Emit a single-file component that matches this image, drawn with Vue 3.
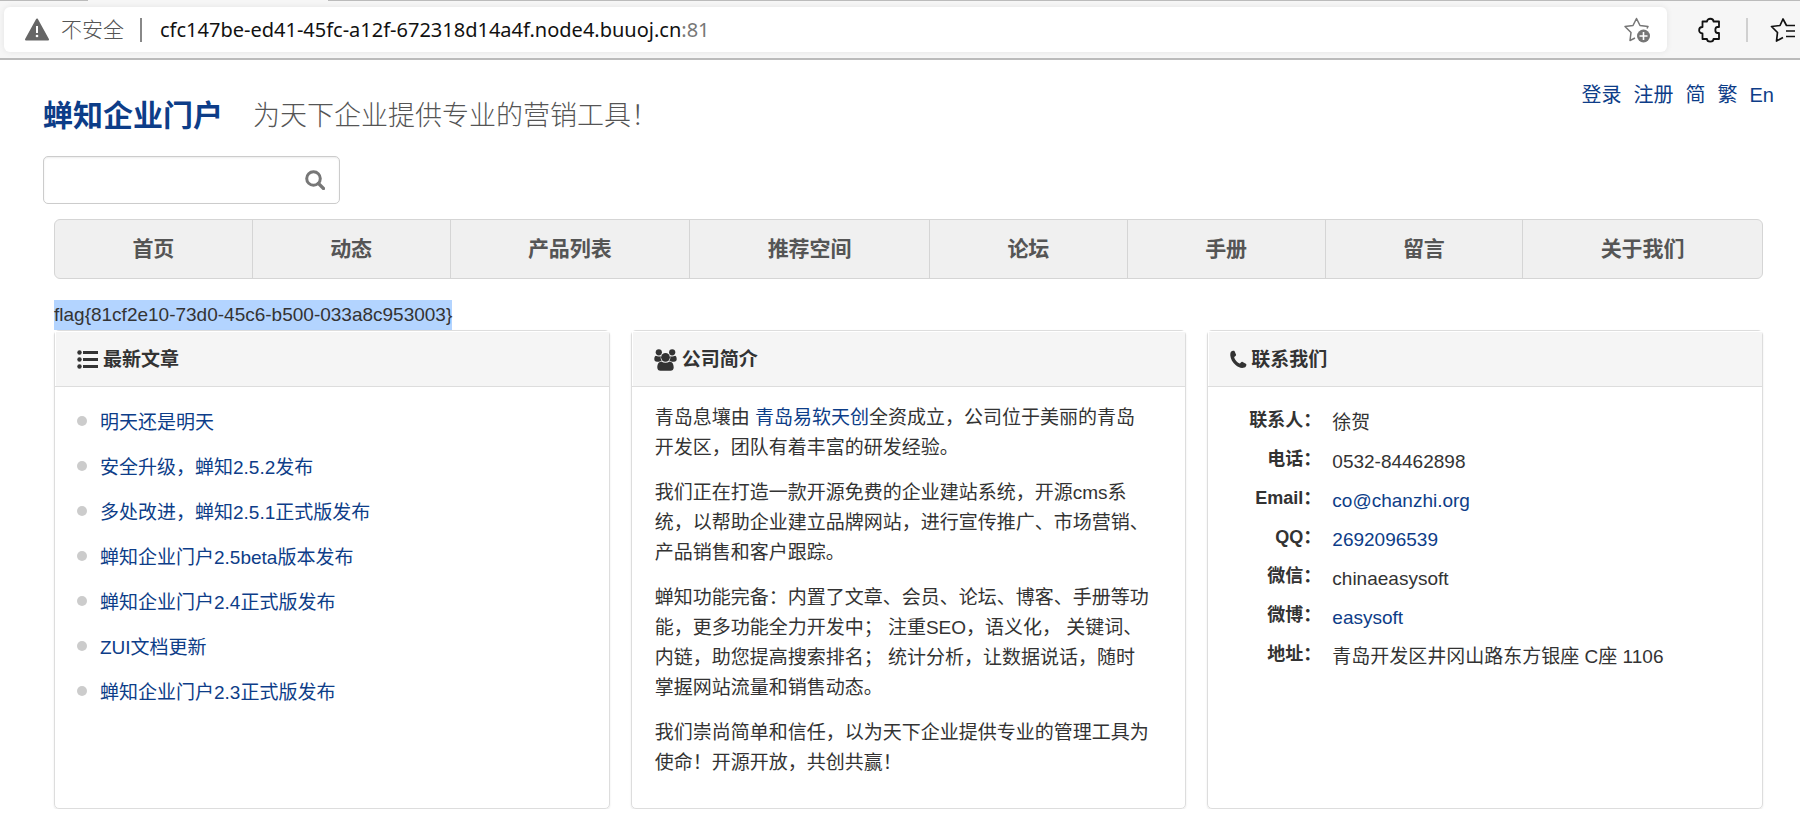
<script setup>
import { ref } from "vue";

const keyword = ref("")
const navs = ["首页", "动态", "产品列表", "推荐空间", "论坛", "手册", "留言", "关于我们"]
const langs = ["登录", "注册", "简", "繁", "En"]
const articles = [
  "明天还是明天",
  "安全升级，蝉知2.5.2发布",
  "多处改进，蝉知2.5.1正式版发布",
  "蝉知企业门户2.5beta版本发布",
  "蝉知企业门户2.4正式版发布",
  "ZUI文档更新",
  "蝉知企业门户2.3正式版发布"
]
const contacts = [
  { label: "联系人：", value: "徐贺" },
  { label: "电话：", value: "0532-84462898" },
  { label: "Email：", value: "co@chanzhi.org", link: true },
  { label: "QQ：", value: "2692096539", link: true },
  { label: "微信：", value: "chinaeasysoft" },
  { label: "微博：", value: "easysoft", link: true },
  { label: "地址：", value: "青岛开发区井冈山路东方银座 C座 1106" }
]
</script>

<template>
  <div class="browser">
    <div class="tab-edge"><span></span><span></span></div>
    <div class="toolbar">
      <div class="address">
        <svg class="warn" width="24" height="24" viewBox="0 0 24 24">
          <path d="M12 1.5 L23 21.5 H1 Z" fill="#666" stroke="#666" stroke-width="2" stroke-linejoin="round" />
          <path d="M12 8v7" stroke="#fff" stroke-width="2" />
          <circle cx="12" cy="18" r="1.3" fill="#fff" />
        </svg>
        <span class="unsafe">不安全</span>
        <span class="url">cfc147be-ed41-45fc-a12f-672318d14a4f.node4.buuoj.cn<em>:81</em></span>
        <button class="tool" aria-label="收藏">
          <svg width="28" height="28" viewBox="0 0 28 28" fill="none">
            <path d="M12 22 L7 24.5 L8 16.5 L2 10.500 L10 9.500 L13.500 2.500 L17 9.500 L25 10.500 L24 12.500" stroke="#767676" stroke-width="1.5" stroke-linejoin="round" />
            <circle cx="20.5" cy="20" r="6.500" fill="#767676" />
            <path d="M20.500 16v8M16.500 20h8" stroke="#fff" stroke-width="1.6" />
          </svg>
        </button>
      </div>
      <button class="tool ext" aria-label="扩展">
        <svg width="26" height="26" viewBox="0 0 26 26" fill="none">
          <path d="M6.500 4.500H10C10 .8 16.500 .8 16.500 4.500H22V10H20.500C17.600 10 17.600 16 20.500 16H22V22H16.500C16.500 25.500 10 25.500 10 22H5.500V16.500C1 16.500 1 10 5.500 10V4.500z" stroke="#111" stroke-width="1.800" stroke-linejoin="round" />
        </svg>
      </button>
      <span class="split"></span>
      <button class="tool" aria-label="收藏夹">
        <svg width="26" height="26" viewBox="0 0 26 26" fill="none">
          <path d="M13 20.500 L6.500 24 L7.500 15.500 L1.500 9.500 L10 8.500 L13 2 L16.500 8.500 H25M16 14H25M16 19.500H25" stroke="#111" stroke-width="1.700" stroke-linejoin="round" />
        </svg>
      </button>
    </div>
  </div>

  <div class="page">
    <header>
      <div class="brand">
        <h1><a href="#">蝉知企业门户</a></h1>
        <span class="slogan">为天下企业提供专业的营销工具！</span>
      </div>
      <div class="langs">
        <a v-for="item in langs" :key="item" href="#">{{ item }}</a>
      </div>
    </header>

    <form class="search" @submit.prevent>
      <input v-model="keyword" type="text" aria-label="搜索">
      <button aria-label="搜索">
        <svg width="20" height="20" viewBox="0 0 20 20" fill="none" stroke="#777">
          <circle cx="8.500" cy="8.500" r="6.800" stroke-width="3" />
          <path d="M13.500 13.500l5 5" stroke-width="3.200" stroke-linecap="round" />
        </svg>
      </button>
    </form>

    <main>
      <nav>
        <a v-for="item in navs" :key="item" href="#">{{ item }}</a>
      </nav>

      <div class="flag"><mark>flag{81cf2e10-73d0-45c6-b500-033a8c953003}</mark></div>

      <div class="row">
        <section class="panel">
          <h2>
            <svg width="22" height="20" viewBox="0 0 22 20" fill="#333">
              <circle cx="2.500" cy="2.500" r="2.200" /><circle cx="2.500" cy="9.500" r="2.200" /><circle cx="2.500" cy="16.500" r="2.200" />
              <path d="M6 1H21v3H6zM6 8H21v3H6zM6 15H21v3H6z" />
            </svg>
            最新文章
          </h2>
          <ul class="articles">
            <li v-for="item in articles" :key="item"><a href="#">{{ item }}</a></li>
          </ul>
        </section>

        <section class="panel">
          <h2>
            <svg width="24" height="22" viewBox="0 0 24 22" fill="#333">
              <circle cx="4.800" cy="3.300" r="3.100" /><circle cx="18.200" cy="3.300" r="3.100" />
              <path d="M1.800 6.800c1.700 1 3.600 1 5 .4-.4 1.800 0 3.400 1 4.600-1 0-1.800.4-2.600 1H3C1.300 12.800.3 11.800.3 10.300c0-1.800.4-3.300 1.500-3.500zM21.200 6.800c-1.700 1-3.600 1-5 .4.4 1.800 0 3.400-1 4.600 1 0 1.800.4 2.600 1H20c1.700 0 2.700-1 2.700-2.500 0-1.800-.4-3.300-1.500-3.500z" />
              <circle cx="11.500" cy="8.300" r="4.400" />
              <path d="M7.300 12.500c2.600 1.800 5.800 1.800 8.400 0 3 .2 4 3.200 4 6 0 2-1.300 3.300-3.200 3.300H6.500c-1.900 0-3.200-1.300-3.200-3.300 0-2.800 1-5.800 4-6z" />
            </svg>
            公司简介
          </h2>
          <div class="about">
            <p>青岛息壤由 <a href="#">青岛易软天创</a>全资成立，公司位于美丽的青岛开发区，团队有着丰富的研发经验。</p>
            <p>我们正在打造一款开源免费的企业建站系统，开源cms系统，以帮助企业建立品牌网站，进行宣传推广、市场营销、产品销售和客户跟踪。</p>
            <p>蝉知功能完备：内置了文章、会员、论坛、博客、手册等功能，更多功能全力开发中； 注重SEO，语义化， 关键词、内链，助您提高搜索排名； 统计分析，让数据说话，随时掌握网站流量和销售动态。</p>
            <p>我们崇尚简单和信任，以为天下企业提供专业的管理工具为使命！开源开放，共创共赢！</p>
          </div>
        </section>

        <section class="panel">
          <h2>
            <svg width="17" height="20" viewBox="0 0 17 20" fill="#333">
              <path d="M.7 2.300C1.200 1.200 2.800.8 4 .8c.4 0 .6.500.8 1l1.300 3c.3.800-2 2-1.900 2.700.6 2.300 3 5 5.300 5.900.8.200 2-1.900 2.700-1.600l3.600 1.900c.4.200.7.500.6 1-.2 1.300-.7 2.400-2 2.900-3 1.200-6.200-.2-8.800-2.500C2.800 12.500.5 9 .3 5.500.2 4.300.3 3.200.7 2.300z" />
            </svg>
            联系我们
          </h2>
          <table class="contacts">
            <tbody>
              <tr v-for="item in contacts" :key="item.label">
                <th scope="row">{{ item.label }}</th>
                <td>
                  <a v-if="item.link" href="#">{{ item.value }}</a>
                  <template v-else>{{ item.value }}</template>
                </td>
              </tr>
            </tbody>
          </table>
        </section>
      </div>
    </main>
  </div>
</template>

<style>
body {
  margin: 0;
  background: #fff;
  color: #333;
  font: 19px/30px "Liberation Sans", "Noto Sans CJK SC", sans-serif;
}
</style>

<style scoped>
a {
  color: #0d3d88;
  text-decoration: none;
}

button {
  padding: 0;
  border: 0;
  background: none;
  cursor: pointer;
}

svg {
  display: block;
}

.browser {
  background: #f6f6f6;
  border-bottom: 2px solid #bbb;
}

.tab-edge {
  display: flex;
  height: 1px;
  gap: 240px;
}

.tab-edge span {
  background: #bbb;
  width: 88px;
}

.tab-edge span:last-child {
  flex: 1;
}

.toolbar {
  display: flex;
  align-items: center;
  padding: 6px 4px;
}

.address {
  flex: 1;
  display: flex;
  align-items: center;
  height: 45px;
  padding: 0 16px 0 21px;
  border-radius: 6px;
  background: #fff;
  box-shadow: 0 0 6px rgba(0, 0, 0, 0.08);
}

.unsafe {
  margin: 0 16px 0 12px;
  font-size: 21px;
  font-weight: 300;
  color: #555;
}

.url {
  flex: 1;
  padding-left: 18px;
  border-left: 2px solid #888;
  font: 20px/24px "Noto Sans", sans-serif;
  color: #111;
}

.url em {
  font-style: normal;
  color: #777;
}

.ext {
  margin-left: 30px;
}

.split {
  width: 2px;
  height: 24px;
  margin: 0 22px 0 23px;
  background: #d0d0d0;
}

header {
  display: flex;
  justify-content: space-between;
  padding: 19px 26px 0 43px;
}

.brand {
  display: flex;
  align-items: center;
  height: 74px;
}

h1 {
  margin: 0 30px 0 0;
  font-size: 30px;
  font-weight: 700;
}

.slogan {
  font-size: 27px;
  font-weight: 300;
  color: #555;
}

.langs {
  display: flex;
  gap: 12px;
  padding-top: 1px;
  font-size: 20px;
}

.search {
  display: flex;
  align-items: center;
  width: 297px;
  height: 48px;
  box-sizing: border-box;
  margin: 3px 43px 15px;
  padding-right: 14px;
  border: 1px solid #ccc;
  border-radius: 5px;
  box-shadow: inset 0 1px 2px rgba(0, 0, 0, 0.08);
}

.search input {
  flex: 1;
  min-width: 0;
  height: 44px;
  padding: 0 12px;
  border: 0;
  outline: 0;
  background: none;
  font: inherit;
}

main {
  padding: 0 37px 0 54px;
}

nav {
  display: flex;
  border: 1px solid #d5d5d5;
  border-radius: 6px;
  background: #f0f0f0;
}

nav a {
  flex: 1 1 auto;
  padding: 14px 0;
  text-align: center;
  font-size: 21px;
  font-weight: 700;
  color: #555;
}

nav a + a {
  border-left: 1px solid #d5d5d5;
}

.flag {
  margin-top: 21px;
}

.flag mark {
  display: inline-block;
  background: #b3d4ff;
  color: #333;
}

.row {
  display: grid;
  grid-template-columns: repeat(3, 1fr);
  gap: 21px;
}

.panel {
  min-height: 477px;
  border: 1px solid #ddd;
  border-radius: 5px;
  box-shadow: 0 1px 2px rgba(0, 0, 0, 0.1);
}

h2 {
  display: flex;
  align-items: center;
  gap: 4px;
  margin: 0;
  padding: 14px 22px 11px;
  border-bottom: 1px solid #ddd;
  background: #f5f5f5;
  box-shadow: inset 1px 1px 0 #fff;
  font-size: 19px;
}

.articles {
  margin: 0;
  padding: 13px 22px;
  list-style: none;
}

.articles li {
  display: flex;
  align-items: center;
  gap: 13px;
  height: 45px;
}

.articles li::before {
  content: "";
  width: 10px;
  height: 10px;
  margin-bottom: 4px;
  border-radius: 50%;
  background: #ccc;
}

.about {
  padding: 16px 34px 15px 23px;
}

.about p {
  margin: 0 0 15px;
}

.contacts {
  margin: 18px 23px 15px;
  border-collapse: collapse;
}

.contacts th {
  width: 90px;
  padding: 0;
  text-align: right;
  vertical-align: top;
  font-size: 18px;
}

.contacts td {
  height: 36px;
  padding: 3px 0 0 11px;
  vertical-align: top;
}
</style>
